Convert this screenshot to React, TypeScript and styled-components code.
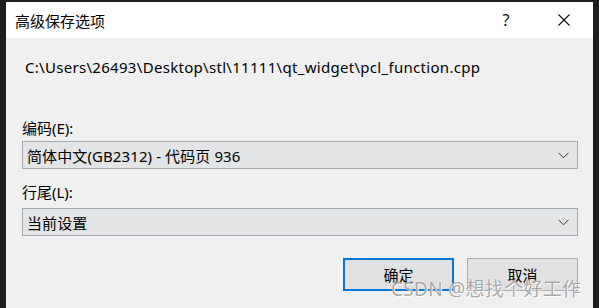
import styled, { createGlobalStyle } from 'styled-components'

const GlobalStyle = createGlobalStyle`
  html, body {
    margin: 0;
    padding: 0;
    background: #1e1e1e;
  }
  #root {
    width: 599px;
    height: 308px;
    overflow: hidden;
  }
`

const Page = styled.div`
  position: relative;
  width: 599px;
  height: 308px;
  background: #1e1e1e;
  padding: 2px 6px 0 6px;
  box-sizing: border-box;
  font-family: "Noto Sans", "Noto Sans CJK SC", sans-serif;
`

const Dialog = styled.div`
  width: 587px;
  height: 306px;
  background: #f0f0f0;
  display: flex;
  flex-direction: column;
`

const TitleBar = styled.div`
  height: 36px;
  background: #ffffff;
  display: flex;
  align-items: center;
  padding-left: 9px;
  color: #000;
  font-size: 15px;
`

const Title = styled.span`
  flex: 1;
  font-family: "Noto Sans CJK SC", sans-serif;
`

const TitleButton = styled.span`
  width: 58px;
  display: flex;
  justify-content: center;
  align-items: center;
  font-size: 16px;
  color: #111;
`

const Body = styled.div`
  padding: 19px 15px 0 16px;
  display: flex;
  flex-direction: column;
`

const PathText = styled.div`
  margin-left: 3px;
  font-size: 15px;
  line-height: 20px;
  color: #000;
  letter-spacing: 0.3px;
`

const Label = styled.div<{ $top: number }>`
  margin-top: ${p => p.$top}px;
  font-size: 15px;
  line-height: 20px;
  color: #000;
`

const Combo = styled.div<{ $top: number }>`
  margin-top: ${p => p.$top}px;
  height: 28px;
  box-sizing: border-box;
  border: 1px solid #a3abb5;
  background: #e3e4e6;
  display: flex;
  align-items: center;
  padding: 0 8px 0 4px;
  font-size: 15px;
  color: #000;
`

const ComboText = styled.span`
  flex: 1;
  letter-spacing: 0.1px;
`

const ButtonRow = styled.div`
  margin-top: 22px;
  display: flex;
  justify-content: flex-end;
  gap: 13px;
`

const Button = styled.div<{ $primary?: boolean }>`
  width: 111px;
  height: 33px;
  box-sizing: border-box;
  border: ${p => (p.$primary ? '2px solid #0078d7' : '1px solid #adadad')};
  background: #e1e1e1;
  display: flex;
  align-items: center;
  justify-content: center;
  font-size: 15px;
  color: #000;
`

const Watermark = styled.div`
  position: absolute;
  left: 391px;
  top: 274px;
  font-size: 19px;
  color: rgba(140, 140, 140, 0.75);
  text-shadow: 0 0 1px #fff, 1px 1px 0 rgba(255, 255, 255, 0.8);
  white-space: nowrap;
  letter-spacing: 0.3px;
`

const Chevron = () => (
  <svg width="11" height="7" viewBox="0 0 11 7">
    <path d="M0.5 0.8 L5.5 5.8 L10.5 0.8" fill="none" stroke="#333" strokeWidth="1" />
  </svg>
)

const CloseIcon = () => (
  <svg width="12" height="12" viewBox="0 0 12 12">
    <path d="M0.5 0.5 L11.5 11.5 M11.5 0.5 L0.5 11.5" stroke="#111" strokeWidth="1.1" />
  </svg>
)

export default function App() {
  return (
    <>
      <GlobalStyle />
      <Page>
        <Dialog>
          <TitleBar>
            <Title>高级保存选项</Title>
            <TitleButton>?</TitleButton>
            <TitleButton>
              <CloseIcon />
            </TitleButton>
          </TitleBar>
          <Body>
            <PathText>C:\Users\26493\Desktop\stl\11111\qt_widget\pcl_function.cpp</PathText>
            <Label $top={41}>编码(E):</Label>
            <Combo $top={3}>
              <ComboText>简体中文(GB2312) - 代码页 936</ComboText>
              <Chevron />
            </Combo>
            <Label $top={13}>行尾(L):</Label>
            <Combo $top={6}>
              <ComboText>当前设置</ComboText>
              <Chevron />
            </Combo>
            <ButtonRow>
              <Button $primary>确定</Button>
              <Button>取消</Button>
            </ButtonRow>
          </Body>
        </Dialog>
        <Watermark>CSDN @想找个好工作</Watermark>
      </Page>
    </>
  )
}
